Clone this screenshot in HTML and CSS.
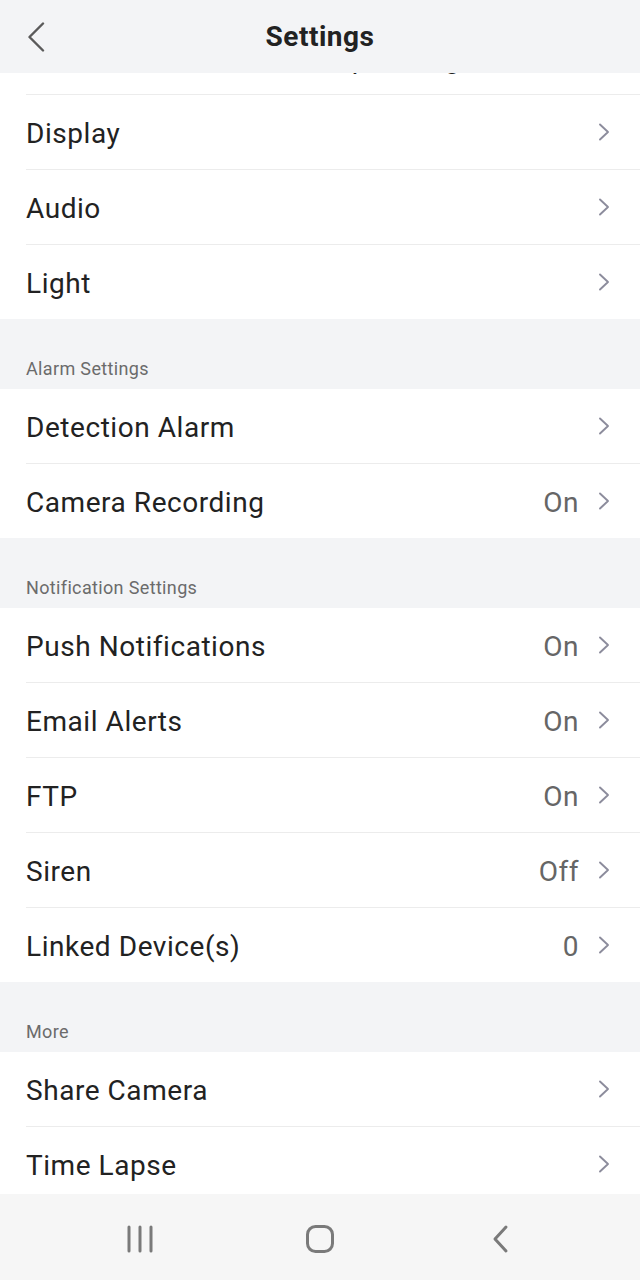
FILE: index.html
```html
<!DOCTYPE html>
<html lang="en">
<head>
<meta charset="utf-8">
<title>Settings</title>
<link rel="stylesheet" href="styles.css">
</head>
<body>
<div class="screen">
  <header class="topbar">
    <button class="back" aria-label="Back">
      <svg width="20" height="30" viewBox="0 0 20 30"><path d="M17 1.5 L3.5 15 L17 28.5" fill="none" stroke="#5a5a5a" stroke-width="2.4" stroke-linecap="round" stroke-linejoin="round"/></svg>
    </button>
    <h1 class="title">Settings</h1>
    <span class="spacer"></span>
  </header>

  <main class="content">
    <div class="group group-first">
      <div class="row"><span class="label">Date and Time Zone Setup Config</span></div>
      <div class="row"><span class="label">Display</span><span class="chev"></span></div>
      <div class="row"><span class="label">Audio</span><span class="chev"></span></div>
      <div class="row"><span class="label">Light</span><span class="chev"></span></div>
    </div>

    <div class="section">Alarm Settings</div>
    <div class="group">
      <div class="row"><span class="label">Detection Alarm</span><span class="chev"></span></div>
      <div class="row"><span class="label">Camera Recording</span><span class="value">On</span><span class="chev"></span></div>
    </div>

    <div class="section">Notification Settings</div>
    <div class="group">
      <div class="row"><span class="label">Push Notifications</span><span class="value">On</span><span class="chev"></span></div>
      <div class="row"><span class="label">Email Alerts</span><span class="value">On</span><span class="chev"></span></div>
      <div class="row"><span class="label">FTP</span><span class="value">On</span><span class="chev"></span></div>
      <div class="row"><span class="label">Siren</span><span class="value">Off</span><span class="chev"></span></div>
      <div class="row"><span class="label">Linked Device(s)</span><span class="value">0</span><span class="chev"></span></div>
    </div>

    <div class="section">More</div>
    <div class="group">
      <div class="row"><span class="label">Share Camera</span><span class="chev"></span></div>
      <div class="row"><span class="label">Time Lapse</span><span class="chev"></span></div>
    </div>
  </main>

  <nav class="navbar">
    <span class="nav-icon">
      <svg width="30" height="30" viewBox="0 0 30 30"><path d="M4 3 V27 M15 3 V27 M26 3 V27" fill="none" stroke="#7a7a7a" stroke-width="3" stroke-linecap="round"/></svg>
    </span>
    <span class="nav-icon">
      <svg width="30" height="30" viewBox="0 0 30 30"><rect x="2.5" y="2.5" width="25" height="25" rx="8" fill="none" stroke="#7a7a7a" stroke-width="3"/></svg>
    </span>
    <span class="nav-icon">
      <svg width="20" height="30" viewBox="0 0 20 30"><path d="M16 3 L5 15 L16 27" fill="none" stroke="#7a7a7a" stroke-width="3" stroke-linecap="round" stroke-linejoin="round"/></svg>
    </span>
  </nav>
</div>
</body>
</html>
```

FILE: styles.css
```css
* { box-sizing: border-box; }

html, body {
  margin: 0;
  padding: 0;
}

body {
  font-family: Roboto, "Noto Sans", "Liberation Sans", sans-serif;
  color: #222;
  background: #f3f4f6;
}

.screen {
  width: 640px;
  height: 1280px;
  display: flex;
  flex-direction: column;
  overflow: hidden;
}

.topbar {
  height: 73px;
  flex: 0 0 73px;
  background: #f3f4f6;
  display: grid;
  grid-template-columns: 1fr auto 1fr;
  align-items: center;
  position: relative;
  z-index: 2;
}

.back {
  justify-self: start;
  margin-left: 26px;
  padding: 0;
  border: 0;
  background: none;
  display: flex;
  margin-top: 1px;
}

.title {
  margin: 0;
  font-size: 28px;
  font-weight: 700;
  color: #222;
  letter-spacing: 0.5px;
}

.content {
  flex: 1 1 auto;
  overflow: hidden;
  background: #f3f4f6;
}

.group {
  background: #fff;
  padding-left: 26px;
}

.group-first {
  margin-top: -53px;
}

.row {
  height: 75px;
  display: flex;
  align-items: center;
  padding-right: 30px;
  border-bottom: 1px solid #ececec;
}

.row:last-child {
  height: 74px;
  border-bottom: 0;
}

.label {
  flex: 1 1 auto;
  font-size: 28px;
  letter-spacing: 0.55px;
  color: #222;
  padding-top: 2px;
  white-space: nowrap;
}

.value {
  font-size: 28px;
  letter-spacing: 0.5px;
  color: #666;
  margin-right: 19px;
  padding-top: 2px;
}

.chev {
  width: 12px;
  height: 18px;
  flex: 0 0 12px;
  background: no-repeat center / 12px 18px;
  background-image: url("data:image/svg+xml;utf8,<svg xmlns='http://www.w3.org/2000/svg' width='12' height='18' viewBox='0 0 12 18'><path d='M2 1.5 L10 9 L2 16.5' fill='none' stroke='%238c8c9c' stroke-width='1.9' stroke-linecap='round' stroke-linejoin='round'/></svg>");
}

.section {
  height: 70px;
  padding: 40px 0 10px 26px;
  font-size: 18px;
  line-height: 20px;
  letter-spacing: 0.35px;
  color: #6b6b6b;
  background: #f3f4f6;
}

.navbar {
  flex: 0 0 86px;
  height: 86px;
  background: #f6f6f6;
  display: flex;
  justify-content: center;
  align-items: center;
  gap: 140px;
  position: relative;
  z-index: 2;
  padding-top: 3px;
}

.nav-icon {
  width: 40px;
  height: 30px;
  display: flex;
  justify-content: center;
  align-items: center;
}
```
